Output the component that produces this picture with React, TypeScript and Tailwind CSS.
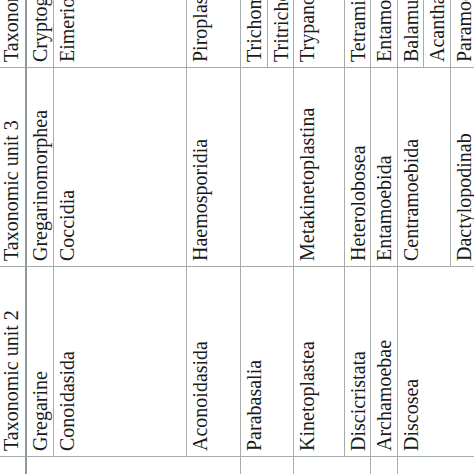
const ROW_START: Record<number, string> = {
  1: "row-start-1",
  2: "row-start-2",
  3: "row-start-3",
  4: "row-start-4",
  5: "row-start-5",
  6: "row-start-6",
  7: "row-start-7",
  8: "row-start-8",
  9: "row-start-9",
  10: "row-start-10",
  11: "row-start-11",
  12: "row-start-12",
};

const ROW_SPAN: Record<number, string> = {
  1: "row-span-1",
  2: "row-span-2",
  3: "row-span-3",
};

const COL_START: Record<number, string> = {
  1: "col-start-1",
  2: "col-start-2",
  3: "col-start-3",
  4: "col-start-4",
};

type Cell = [number, number, string];

// columns of the (unrotated) table, left to right
const columns: Cell[][] = [
  [[2, 3, ""], [5, 2, ""], [7, 2, ""], [9, 1, ""], [10, 3, ""]],
  [
    [2, 1, "Gregarine"],
    [3, 1, "Conoidasida"],
    [4, 1, "Aconoidasida"],
    [5, 2, "Parabasalia"],
    [7, 1, "Kinetoplastea"],
    [8, 1, "Discicristata"],
    [9, 1, "Archamoebae"],
    [10, 3, "Discosea"],
  ],
  [
    [2, 1, "Gregarinomorphea"],
    [3, 1, "Coccidia"],
    [4, 1, "Haemosporidia"],
    [5, 2, ""],
    [7, 1, "Metakinetoplastina"],
    [8, 1, "Heterolobosea"],
    [9, 1, "Entamoebida"],
    [10, 2, "Centramoebida"],
    [12, 1, "Dactylopodinab"],
  ],
  [
    [2, 1, "Cryptogregarinorida"],
    [3, 1, "Eimeriorina"],
    [4, 1, "Piroplasmida"],
    [5, 1, "Trichomonadida"],
    [6, 1, "Tritrichomonadida"],
    [7, 1, "Trypanosomatida"],
    [8, 1, "Tetramitida"],
    [9, 1, "Entamoebidae"],
    [10, 1, "Balamuthiidae"],
    [11, 1, "Acanthamoebidae"],
    [12, 1, "Paramoebidae"],
  ],
];

const headers = ["", "Taxonomic unit 2", "Taxonomic unit 3", "Taxonomic unit 4"];

export default function App() {
  return (
    <div className="w-[474px] h-[474px] overflow-hidden bg-white">
      <div className="w-[474px] h-[474px] -rotate-90 overflow-hidden">
        <div className="grid grid-cols-[17px_190px_199px_68px] grid-rows-[27px_27px_133px_54px_27px_26px_51px_26px_27px_26px_27px_23px] font-['Liberation_Serif',serif] text-[20px] leading-[20px] text-[#1a1a1a]">
          {headers.map((h, c) => (
            <div
              key={"h" + c}
              className={`row-start-1 ${COL_START[c + 1]} ${c > 0 ? "border-l border-l-[#a6acaa]" : ""} border-b-2 border-b-[#8d9997] pt-[1px] pl-[5px] whitespace-nowrap overflow-hidden`}
            >
              {h}
            </div>
          ))}
          {columns.map((cells, c) =>
            cells.map(([start, span, text]) => (
              <div
                key={c + "-" + start}
                className={`${ROW_START[start]} ${ROW_SPAN[span]} ${COL_START[c + 1]} ${c > 0 ? "border-l border-l-[#a6acaa]" : ""} ${start + span <= 12 ? "border-b border-b-[#a6acaa]" : ""} pt-[3px] pl-[5px] whitespace-nowrap overflow-hidden`}
              >
                {text}
              </div>
            ))
          )}
        </div>
      </div>
    </div>
  );
}
